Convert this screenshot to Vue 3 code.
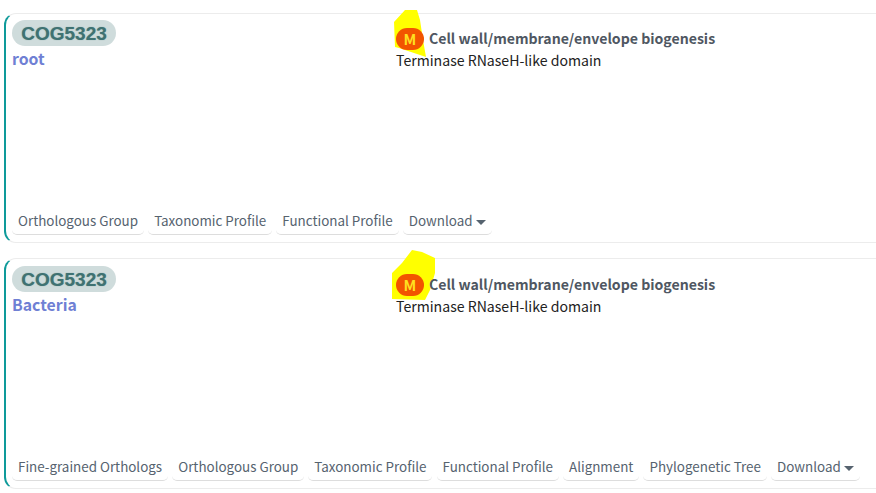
<script setup>
const cards = [
  { name: 'root', tabs: ['Orthologous Group', 'Taxonomic Profile', 'Functional Profile'], blob: 'M11 0 L23 0 L26 10 L29 30 L32 47 L20 43 L5 38 L1 37 L0 12 Z' },
  { name: 'Bacteria', tabs: ['Fine-grained Orthologs', 'Orthologous Group', 'Taxonomic Profile', 'Functional Profile', 'Alignment', 'Phylogenetic Tree'], blob: 'M20 0 L30 2 L43 8 L43 23 L38 40 L33 50 L0 49 L0 23 L10 13 Z' }
]
</script>

<template>
  <main class="page">
    <section v-for="(card, i) in cards" :key="card.name" class="card" :class="{ second: i === 1 }">
      <div class="top">
        <div class="left">
          <span class="badge">COG5323</span>
          <a class="name">{{ card.name }}</a>
        </div>
        <div class="right">
          <svg class="scribble" viewBox="0 0 46 50" width="46" height="50" aria-hidden="true"><path :d="card.blob" fill="#ffff00" /></svg>
          <div class="cat">
            <span class="circle">M</span>
            <strong>Cell wall/membrane/envelope biogenesis</strong>
          </div>
          <div class="desc">Terminase RNaseH-like domain</div>
        </div>
      </div>
      <nav class="tabs">
        <span v-for="t in card.tabs" :key="t" class="tab">{{ t }}</span>
        <span class="tab">Download<i class="caret"></i></span>
      </nav>
    </section>
  </main>
</template>

<style scoped>
.page {
  width: 876px;
  height: 493px;
  overflow: hidden;
  background: #fff;
  padding: 13px 0 0 4px;
  box-sizing: border-box;
  display: flex;
  flex-direction: column;
  gap: 15px;
  font-family: "Noto Sans CJK SC", "Noto Sans", sans-serif;
  color: #333;
}
.card {
  box-sizing: border-box;
  flex: none;
  width: 900px;
  height: 230px;
  border: 1px solid #ececec;
  border-left: 2px solid #0e9a9a;
  border-radius: 12px;
  padding: 6px 0 0 6px;
  display: flex;
  flex-direction: column;
  justify-content: space-between;
}
.card.second { height: 231px; padding-top: 7px; }
.top { display: flex; }
.left { width: 384px; display: flex; flex-direction: column; align-items: flex-start; }
.badge {
  height: 26px;
  width: 104px;
  text-align: center;
  background: #cfdcdc;
  border-radius: 13px;
  font: bold 19px/27px "Liberation Sans", sans-serif;
  color: #3f7272;
  text-shadow: 0 0 1px rgba(63, 114, 114, 0.6);
}
.name {
  font-size: 15.8px;
  line-height: 25px;
  font-weight: 700;
  color: #6f80d4;
}
.right { position: relative; padding-top: 6px; }
.scribble { position: absolute; left: -2px; top: -10px; }
.card.second .scribble { left: -4px; top: -16px; }
.cat { position: relative; display: flex; align-items: center; height: 23px; gap: 5px; font-size: 14.1px; }
.cat strong { color: #4f5762; font-weight: 700; }
.desc { position: relative; font-size: 14.1px; line-height: 23px; color: #222; }
.circle {
  width: 28px;
  height: 22px;
  margin-top: 2px;
  border-radius: 11px;
  background: #f25400;
  color: #ffdf20;
  font: 700 15px/22px "Noto Sans CJK SC", sans-serif;
  text-align: center;
  display: block;
}
.tabs { display: flex; gap: 4.1px; margin-bottom: 7px; }
.tab {
  font-size: 13.4px;
  line-height: 16px;
  height: 23px;
  box-sizing: border-box;
  padding: 0 6px;
  white-space: nowrap;
  color: #56636f;
  border-bottom: 1px solid #ddd;
  border-radius: 5px;
}
.caret {
  display: inline-block;
  vertical-align: middle;
  margin-left: 3px;
  border: 5px solid transparent;
  border-top: 5px solid #56636f;
  border-bottom: 0;
}
</style>
